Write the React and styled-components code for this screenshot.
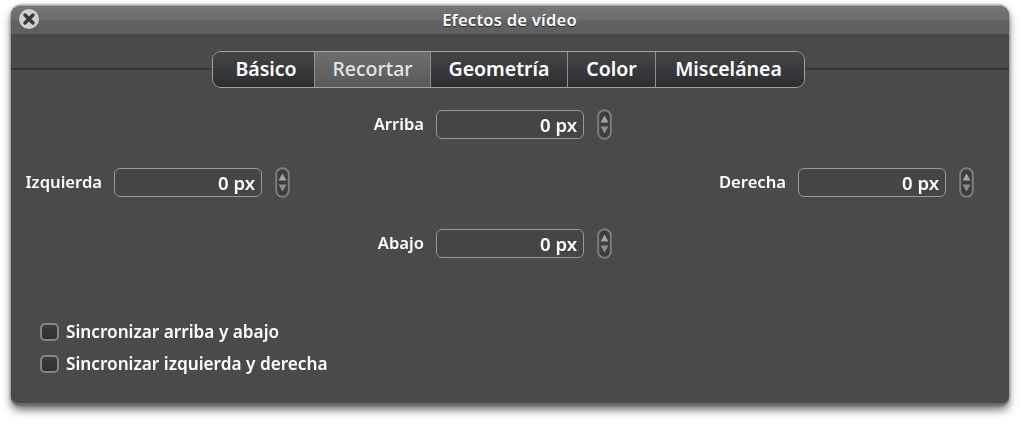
import React from 'react'
import styled, { createGlobalStyle } from 'styled-components'

const GlobalStyle = createGlobalStyle`
html, body {
    margin: 0;
    padding: 0;
    background: #fff;
}
body {
    width: 1020px;
    height: 424px;
    overflow: hidden;
    font-family: "Noto Sans", "DejaVu Sans", sans-serif;
}
`

const TABS = ['Básico', 'Recortar', 'Geometría', 'Color', 'Miscelánea']
const TAB_WIDTHS = [102, 116, 137, 88, 148]

const App = () => {
    return (
        <Page>
            <GlobalStyle />
            <Panel>
                <TitleBar>
                    <CloseButton>
                        <svg width="20" height="20" viewBox="0 0 20 20">
                            <circle cx="10" cy="10" r="10" fill="#cfcfcf" />
                            <path d="M6 6 L14 14 M14 6 L6 14" stroke="#383838" strokeWidth="3.4" strokeLinecap="round" />
                        </svg>
                    </CloseButton>
                    <Title>Efectos de vídeo</Title>
                </TitleBar>
                <TabRow>
                    <Tabs>
                        {TABS.map((name, i) => (
                            <Tab key={name} $active={name === 'Recortar'} $width={TAB_WIDTHS[i]}>{name}</Tab>
                        ))}
                    </Tabs>
                </TabRow>
                <Fields>
                    <FieldSlot $row={1} $col={2}>
                        <Field label="Arriba" labelWidth={51} />
                    </FieldSlot>
                    <FieldSlot $row={2} $col={1}>
                        <Field label="Izquierda" labelWidth={78} />
                    </FieldSlot>
                    <FieldSlot $row={2} $col={3}>
                        <Field label="Derecha" labelWidth={68} />
                    </FieldSlot>
                    <FieldSlot $row={3} $col={2}>
                        <Field label="Abajo" labelWidth={51} />
                    </FieldSlot>
                </Fields>
                <Checks>
                    <CheckRow><CheckBox /><span>Sincronizar arriba y abajo</span></CheckRow>
                    <CheckRow><CheckBox /><span>Sincronizar izquierda y derecha</span></CheckRow>
                </Checks>
            </Panel>
        </Page>
    )
}

const Field = ({ label, labelWidth }) => (
    <FieldWrap>
        <FieldLabel $width={labelWidth}>{label}</FieldLabel>
        <Input>0 px</Input>
        <Stepper>
            <svg width="15" height="31" viewBox="0 0 15 31">
                <rect x="1.2" y="1.2" width="12.6" height="28.6" rx="6.3" fill="#3d3d3d" stroke="#7d7d7d" strokeWidth="2" />
                <path d="M7.5 6.5 L11.5 13.5 H3.5 Z" fill="#a4a4a4" />
                <path d="M7.5 24.5 L11.5 17.5 H3.5 Z" fill="#8e8e8e" />
            </svg>
        </Stepper>
    </FieldWrap>
)

const Page = styled.div`
width: 1020px;
height: 424px;
padding: 5px 11px 0 11px;
box-sizing: border-box;
`
const Panel = styled.div`
width: 998px;
height: 400px;
border-radius: 10px 10px 8px 8px;
background: #4a4a4a;
box-shadow: 0 5px 9px rgba(0,0,0,0.55), 0 0 3px rgba(0,0,0,0.5);
border-top: 1px solid #a8a8a8;
border-bottom: 2px solid #6a6a6a;
box-sizing: border-box;
overflow: hidden;
display: flex;
flex-direction: column;
filter: blur(0.45px);
`
const TitleBar = styled.div`
position: relative;
height: 28px;
flex: none;
display: flex;
align-items: center;
justify-content: center;
background: linear-gradient(#757575 0, #6c6c6c 50%, #626262 52%, #5f5f5f 100%);
`
const CloseButton = styled.div`
position: absolute;
left: 8px;
top: 3px;
width: 20px;
height: 20px;
svg { display: block; }
`
const Title = styled.div`
color: #fff;
font-size: 16.5px;
font-weight: 600;
letter-spacing: 0.25px;
text-shadow: 0 1px 1px rgba(0,0,0,0.6);
margin-top: -1px;
margin-right: 1px;
`
const TabRow = styled.div`
flex: none;
height: 37px;
margin-top: 17px;
padding-right: 3px;
display: flex;
justify-content: center;
background: linear-gradient(transparent 17px, #353535 17px, #353535 19px, transparent 19px);
`
const Tabs = styled.div`
display: flex;
border: 1.5px solid #a2a2a2;
border-radius: 9px;
overflow: hidden;
box-sizing: border-box;
height: 37px;
`
const Tab = styled.div`
width: ${(p) => p.$width}px;
box-sizing: border-box;
display: flex;
align-items: center;
justify-content: center;
font-size: 19.5px;
font-weight: ${(p) => (p.$active ? 500 : 600)};
color: ${(p) => (p.$active ? '#e4e4e4' : '#fff')};
background: ${(p) => (p.$active
    ? 'linear-gradient(#6e6e6e, #5a5a5a)'
    : 'linear-gradient(#464646, #2c2d31)')};
border-right: 1px solid #8f8f8f;
padding-bottom: 3px;
&:first-child { padding-left: 5px; }
&:last-child { border-right: none; padding-right: 3px; }
`
const Fields = styled.div`
flex: none;
margin-top: 21px;
padding: 0 35px 0 13px;
display: grid;
grid-template-columns: 349px 1fr auto;
grid-template-rows: 58px 61px 31px;
`
const FieldSlot = styled.div`
grid-row: ${(p) => p.$row};
grid-column: ${(p) => p.$col};
`
const FieldWrap = styled.div`
display: flex;
align-items: center;
height: 31px;
`
const FieldLabel = styled.div`
width: ${(p) => p.$width}px;
text-align: right;
white-space: nowrap;
color: #fff;
font-size: 16.6px;
font-weight: 600;
margin-right: 12px;
margin-top: -3px;
`
const Input = styled.div`
width: 148px;
height: 29px;
box-sizing: border-box;
border: 1.5px solid #989898;
border-radius: 6px;
background: #454545;
color: #fff;
font-size: 18.5px;
font-weight: 600;
display: flex;
align-items: center;
justify-content: flex-end;
padding: 0 6px 0 0;
`
const Stepper = styled.div`
width: 15px;
height: 31px;
margin-left: 13px;
svg { display: block; }
`
const Checks = styled.div`
flex: none;
margin-top: 63px;
padding-left: 29px;
display: flex;
flex-direction: column;
gap: 12px;
`
const CheckRow = styled.div`
display: flex;
align-items: center;
gap: 7px;
height: 20px;
color: #fff;
font-size: 17.2px;
font-weight: 600;
span { margin-top: -1px; }
`
const CheckBox = styled.div`
width: 19px;
height: 18px;
box-sizing: border-box;
border: 2px solid #858585;
border-radius: 5px;
background: linear-gradient(#3c3c3c, #2e2f33);
`

export default App
